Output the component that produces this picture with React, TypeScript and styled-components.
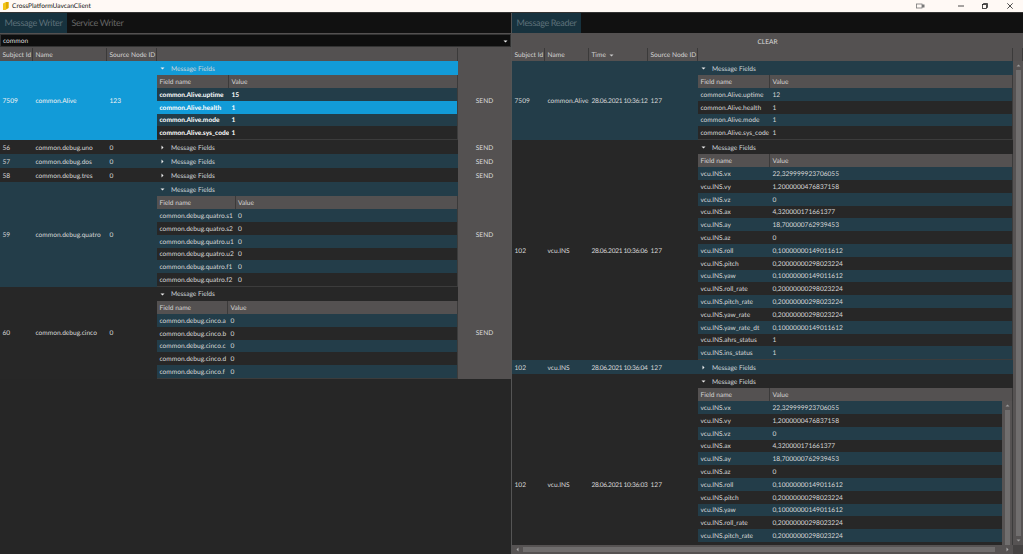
import styled, { createGlobalStyle } from 'styled-components'

const GlobalStyle = createGlobalStyle`
  html, body { margin: 0; padding: 0; background: #262626; }
  body {
    font-family: Lato, Roboto, "Noto Sans", sans-serif;
    font-size: 6.6px;
    color: #d8d8d8;
    text-rendering: geometricPrecision;
  }
  * { box-sizing: border-box; }
`

const teal = '#233d49'
const dark = '#272727'
const gray = '#545151'
const blue = '#129bd8'

const Page = styled.div`
  width: 1023px;
  height: 554px;
  overflow: hidden;
  display: flex;
  flex-direction: column;
`

const TitleBar = styled.div`
  height: 13px;
  background: #fff9f5;
  border-bottom: 1px solid #333;
  display: flex;
  align-items: center;
  padding-left: 3px;
  color: #111;
  font-size: 6.6px;
`

const TitleText = styled.span`
  margin-left: 3px;
  flex: 1;
`

const WinControls = styled.div`
  display: flex;
  align-items: center;
  height: 12px;
`

const WinIcon = styled.svg<{ $gap: number }>`
  display: block;
  margin-right: ${(p) => p.$gap}px;
`

const Panels = styled.div`
  flex: 1;
  min-height: 0;
  display: grid;
  grid-template-columns: 512px 511px;
`

const Panel = styled.div`
  display: flex;
  flex-direction: column;
  min-height: 0;
  overflow: hidden;
`

const LeftPanel = styled(Panel)`
  border-right: 1px solid #555;
`

const Tabs = styled.div`
  height: 20px;
  flex: none;
  background: #111;
  display: flex;
`

const Tab = styled.div<{ $active?: boolean }>`
  padding: 0 4.5px;
  font-size: 9px;
  letter-spacing: -0.32px;
  line-height: 20px;
  background: ${(p) => (p.$active ? '#17323e' : 'transparent')};
  color: ${(p) => (p.$active ? '#5d7079' : '#666')};
`

const ComboBar = styled.div`
  height: 15px;
  flex: none;
  background: ${gray};
  padding: 1px 0 1px 0;
`

const Combo = styled.div`
  height: 13px;
  background: #0e0e0e;
  border: 1px solid #333;
  display: flex;
  align-items: center;
  justify-content: space-between;
  padding: 1px 2px 0;
  color: #ddd;
`

const ClearBar = styled.div`
  height: 15px;
  flex: none;
  background: ${gray};
  display: flex;
  align-items: center;
  justify-content: center;
  padding-top: 2px;
  color: #ddd;
`

const HeaderRow = styled.div<{ $cols: string }>`
  height: 13px;
  flex: none;
  display: grid;
  grid-template-columns: ${(p) => p.$cols};
  background: ${gray};
`

const HeaderCell = styled.div`
  display: flex;
  align-items: center;
  gap: 3px;
  padding: 1px 0 0 2.5px;
  border-right: 1px solid #3b3a3a;
  color: #d4d4d4;
  white-space: nowrap;
  overflow: hidden;
`

const Rows = styled.div`
  flex: 1;
  min-height: 0;
  overflow: hidden;
  background: #262626;
`

const Row = styled.div<{ $cols: string; $bg: string }>`
  display: grid;
  grid-template-columns: ${(p) => p.$cols};
  background: ${(p) => p.$bg};
`

const Cell = styled.div<{ $selected?: boolean }>`
  display: flex;
  align-items: center;
  padding: 1px 0 0 2.5px;
  white-space: nowrap;
  overflow: hidden;
  color: ${(p) => (p.$selected ? '#f2f2f2' : '#d8d8d8')};
`

const TimeCell = styled(Cell)`
  letter-spacing: -0.3px;
`

const SendCell = styled.div`
  background: ${gray};
  display: flex;
  align-items: center;
  justify-content: center;
  padding-top: 1px;
  color: #ddd;
`

const Details = styled.div`
  min-width: 0;
`

const DetailsHead = styled.div<{ $bg: string }>`
  height: 14px;
  background: ${(p) => p.$bg};
  display: flex;
  align-items: center;
  padding: 1px 0 0 3px;
  gap: 6px;
  color: #cfd6d9;
`

const FieldHeader = styled.div<{ $w: number }>`
  height: 13px;
  display: grid;
  grid-template-columns: ${(p) => p.$w}px 1fr;
  background: ${gray};
`

const FieldBody = styled.div`
  display: flex;
  background: #3c3c3c;
  padding: 0 1px 1px 0;
`

const FieldRows = styled.div`
  flex: 1;
  min-width: 0;
`

const FieldRow = styled.div<{ $w: number; $bg: string; $strong?: boolean }>`
  height: 12.8px;
  display: grid;
  grid-template-columns: ${(p) => p.$w}px 1fr;
  align-items: center;
  background: ${(p) => p.$bg};
  color: ${(p) => (p.$strong ? '#fff' : '#d8d8d8')};
  font-weight: ${(p) => (p.$strong ? 700 : 400)};
`

const FieldCell = styled.div`
  padding: 1px 0 0 2.5px;
  white-space: nowrap;
  overflow: hidden;
`

const VScroll = styled.div`
  width: 10px;
  flex: none;
  background: #565353;
  display: flex;
  flex-direction: column;
  align-items: center;
  padding: 2px 0;
  gap: 2px;
`

const VThumb = styled.div`
  flex: 1;
  width: 5px;
  background: #706e6e;
`

const RightBody = styled.div`
  flex: 1;
  min-height: 0;
  display: flex;
`

const RightCol = styled.div`
  flex: 1;
  min-width: 0;
  overflow: hidden;
  background: #262626;
`

const HScroll = styled.div`
  height: 9px;
  flex: none;
  background: #565353;
  display: flex;
  align-items: center;
  padding: 0 0 1px 3px;
`

const HThumb = styled.div`
  flex: 1;
  height: 5px;
  margin: 0 10px 0 3px;
  background: #706e6e;
`

const Corner = styled.div`
  width: 10px;
  height: 9px;
  margin-left: 3px;
  background: #454343;
`

const Triangle = ({ dir, color = '#eee' }: { dir: 'up' | 'down' | 'left' | 'right'; color?: string }) => {
  const paths = {
    down: 'M0.5 1.5H4.5L2.5 3.5Z',
    up: 'M0.5 3.5H4.5L2.5 1.5Z',
    right: 'M1.5 0.5V4.5L3.5 2.5Z',
    left: 'M3.5 0.5V4.5L1.5 2.5Z',
  }
  return (
    <svg width="5" height="5" viewBox="0 0 5 5" style={{ flex: 'none' }}>
      <path d={paths[dir]} fill={color} />
    </svg>
  )
}

type Field = [string, string]

const FieldsTable = ({
  fields,
  w,
  headBg,
  selected,
  scroll,
}: {
  fields?: Field[]
  w?: number
  headBg: string
  selected?: boolean
  scroll?: boolean
}) => (
  <Details>
    <DetailsHead $bg={headBg}>
      <Triangle dir={fields ? 'down' : 'right'} />
      <span>Message Fields</span>
    </DetailsHead>
    {fields && w && (
      <>
        <FieldHeader $w={w}>
          <HeaderCell>Field name</HeaderCell>
          <HeaderCell>Value</HeaderCell>
        </FieldHeader>
        <FieldBody>
          <FieldRows>
            {fields.map((f, i) => (
              <FieldRow
                key={f[0]}
                $w={w}
                $strong={selected}
                $bg={selected && i === 1 ? blue : i % 2 === 0 ? teal : dark}
              >
                <FieldCell>{f[0]}</FieldCell>
                <FieldCell>{f[1]}</FieldCell>
              </FieldRow>
            ))}
          </FieldRows>
          {scroll && (
            <VScroll>
              <Triangle dir="up" color="#999" />
              <VThumb />
            </VScroll>
          )}
        </FieldBody>
      </>
    )}
  </Details>
)

const zeros = (prefix: string, names: string[]): Field[] => names.map((n) => [prefix + n, '0'])

const insFields: Field[] = [
  ['vcu.INS.vx', '22,329999923706055'],
  ['vcu.INS.vy', '1,2000000476837158'],
  ['vcu.INS.vz', '0'],
  ['vcu.INS.ax', '4,320000171661377'],
  ['vcu.INS.ay', '18,700000762939453'],
  ['vcu.INS.az', '0'],
  ['vcu.INS.roll', '0,10000000149011612'],
  ['vcu.INS.pitch', '0,20000000298023224'],
  ['vcu.INS.yaw', '0,10000000149011612'],
  ['vcu.INS.roll_rate', '0,20000000298023224'],
  ['vcu.INS.pitch_rate', '0,20000000298023224'],
  ['vcu.INS.yaw_rate', '0,20000000298023224'],
  ['vcu.INS.yaw_rate_dt', '0,10000000149011612'],
  ['vcu.INS.ahrs_status', '1'],
  ['vcu.INS.ins_status', '1'],
]

const aliveFields = (uptime: string): Field[] => [
  ['common.Alive.uptime', uptime],
  ['common.Alive.health', '1'],
  ['common.Alive.mode', '1'],
  ['common.Alive.sys_code', '1'],
]

const writerCols = '33px 74px 50px 301px 53px'
const readerCols = '33px 44px 59px 50px 315px'

const writerRows = [
  { id: '7509', name: 'common.Alive', src: '123', bg: blue, fields: aliveFields('15'), w: 72, selected: true },
  { id: '56', name: 'common.debug.uno', src: '0', bg: dark },
  { id: '57', name: 'common.debug.dos', src: '0', bg: teal },
  { id: '58', name: 'common.debug.tres', src: '0', bg: dark },
  {
    id: '59',
    name: 'common.debug.quatro',
    src: '0',
    bg: teal,
    w: 78.5,
    fields: zeros('common.debug.quatro.', ['s1', 's2', 'u1', 'u2', 'f1', 'f2']),
  },
  {
    id: '60',
    name: 'common.debug.cinco',
    src: '0',
    bg: dark,
    w: 71,
    fields: zeros('common.debug.cinco.', ['a', 'b', 'c', 'd', 'f']),
  },
]

const readerRows = [
  { name: 'common.Alive', id: '7509', time: '28.06.2021 10:36:12', bg: teal, fields: aliveFields('12') },
  { name: 'vcu.INS', id: '102', time: '28.06.2021 10:36:06', bg: dark, fields: insFields },
  { name: 'vcu.INS', id: '102', time: '28.06.2021 10:36:04', bg: teal },
  { name: 'vcu.INS', id: '102', time: '28.06.2021 10:36:03', bg: dark, fields: insFields, scroll: true },
]

const App = () => (
  <Page>
    <GlobalStyle />
    <TitleBar>
      <svg width="6" height="8" viewBox="0 0 6 8">
        <path d="M0 1.5L3 0H5.5V6L2.5 8H0Z" fill="#f2c417" />
        <path d="M3 0H5.5V6L3 7Z" fill="#e0a800" />
      </svg>
      <TitleText>CrossPlatformUavcanClient</TitleText>
      <WinControls>
        <WinIcon $gap={33} width="9" height="6" viewBox="0 0 9 6">
          <rect x="0.5" y="1" width="5.5" height="4" fill="none" stroke="#777" strokeWidth="0.8" />
          <rect x="6" y="1.5" width="2.5" height="3" fill="#777" />
        </WinIcon>
        <WinIcon $gap={18} width="6" height="6" viewBox="0 0 6 6">
          <path d="M0 3H6" stroke="#222" strokeWidth="0.8" />
        </WinIcon>
        <WinIcon $gap={19} width="6" height="6" viewBox="0 0 6 6">
          <rect x="0.5" y="1.5" width="4" height="4" fill="none" stroke="#222" strokeWidth="0.8" />
          <path d="M1.5 1.5V0.5H5.5V4.5H4.5" fill="none" stroke="#222" strokeWidth="0.8" />
        </WinIcon>
        <WinIcon $gap={10} width="6" height="6" viewBox="0 0 6 6">
          <path d="M0.3 0.3L5.7 5.7M5.7 0.3L0.3 5.7" stroke="#222" strokeWidth="0.8" />
        </WinIcon>
      </WinControls>
    </TitleBar>
    <Panels>
      <LeftPanel>
        <Tabs>
          <Tab $active>Message Writer</Tab>
          <Tab>Service Writer</Tab>
        </Tabs>
        <ComboBar>
          <Combo>
            <span>common</span>
            <Triangle dir="down" />
          </Combo>
        </ComboBar>
        <HeaderRow $cols={writerCols}>
          <HeaderCell>Subject Id</HeaderCell>
          <HeaderCell>Name</HeaderCell>
          <HeaderCell>Source Node ID</HeaderCell>
          <HeaderCell />
        </HeaderRow>
        <Rows>
          {writerRows.map((r) => (
            <Row key={r.id} $cols={writerCols} $bg={r.bg}>
              <Cell $selected={r.selected}>{r.id}</Cell>
              <Cell $selected={r.selected}>{r.name}</Cell>
              <Cell $selected={r.selected}>{r.src}</Cell>
              <FieldsTable headBg={r.bg} fields={r.fields} w={r.w} selected={r.selected} />
              <SendCell>SEND</SendCell>
            </Row>
          ))}
        </Rows>
      </LeftPanel>
      <Panel>
        <Tabs>
          <Tab $active>Message Reader</Tab>
        </Tabs>
        <ClearBar>CLEAR</ClearBar>
        <HeaderRow $cols={readerCols + ' 1fr'}>
          <HeaderCell>Subject Id</HeaderCell>
          <HeaderCell>Name</HeaderCell>
          <HeaderCell>
            Time <Triangle dir="down" color="#ccc" />
          </HeaderCell>
          <HeaderCell>Source Node ID</HeaderCell>
          <HeaderCell />
          <HeaderCell />
        </HeaderRow>
        <RightBody>
          <RightCol>
            {readerRows.map((r) => (
              <Row key={r.time} $cols={readerCols} $bg={r.bg}>
                <Cell>{r.id}</Cell>
                <Cell>{r.name}</Cell>
                <TimeCell>{r.time}</TimeCell>
                <Cell>127</Cell>
                <FieldsTable headBg={r.bg} fields={r.fields} w={72} scroll={r.scroll} />
              </Row>
            ))}
          </RightCol>
          <VScroll>
            <Triangle dir="up" color="#999" />
            <VThumb />
            <Triangle dir="down" color="#999" />
          </VScroll>
        </RightBody>
        <HScroll>
          <Triangle dir="left" color="#aaa" />
          <HThumb />
          <Triangle dir="right" color="#aaa" />
          <Corner />
        </HScroll>
      </Panel>
    </Panels>
  </Page>
)

export default App
